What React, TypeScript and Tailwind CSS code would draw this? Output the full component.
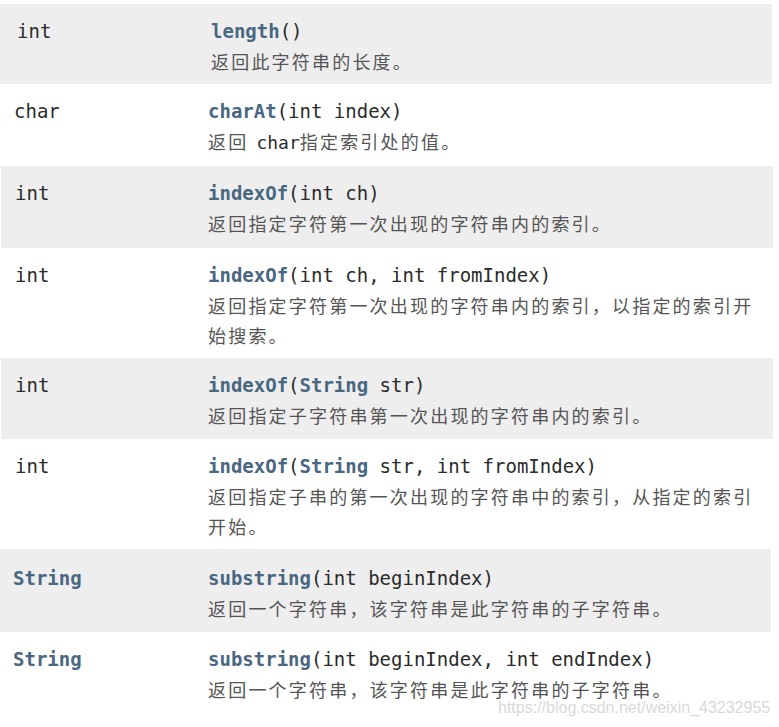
import React from "react";

const mono = "font-['DejaVu_Sans_Mono','Liberation_Mono',monospace]";
const cjk = "font-['Noto_Sans_CJK_SC','Noto_Sans',sans-serif]";

const L = ({ children }: { children: React.ReactNode }) => (
  <span className="font-bold text-[#4a6782]">{children}</span>
);

type Row = {
  type: React.ReactNode;
  code: React.ReactNode;
  desc: React.ReactNode;
  cls: string;
  typeCls: string;
};

const rows: Row[] = [
  {
    type: "int",
    code: (<><L>length</L>()</>),
    desc: "返回此字符串的长度。",
    cls: "bg-[#eeeeee] h-[80px] mt-[4px] w-[772px] pl-[17px]",
    typeCls: "w-[194px]",
  },
  {
    type: "char",
    code: (<><L>charAt</L>(int index)</>),
    desc: (<>返回<span className={`${mono} tracking-normal text-[#2b2b2b] pl-[8px]`}>char</span>指定索引处的值。</>),
    cls: "bg-white h-[82px] w-[772px] pl-[14px]",
    typeCls: "w-[194px]",
  },
  {
    type: "int",
    code: (<><L>indexOf</L>(int ch)</>),
    desc: "返回指定字符第一次出现的字符串内的索引。",
    cls: "bg-[#eeeeee] h-[82px] w-[772px] ml-[1px] pl-[14px]",
    typeCls: "w-[193px]",
  },
  {
    type: "int",
    code: (<><L>indexOf</L>(int ch, int fromIndex)</>),
    desc: (<>返回指定字符第一次出现的字符串内的索引，以指定的索引开<br />始搜索。</>),
    cls: "bg-white h-[110px] w-[772px] pl-[15px]",
    typeCls: "w-[193px]",
  },
  {
    type: "int",
    code: (<><L>indexOf</L>(<L>String</L> str)</>),
    desc: "返回指定子字符串第一次出现的字符串内的索引。",
    cls: "bg-[#eeeeee] h-[81px] w-[772px] ml-[1px] pl-[14px]",
    typeCls: "w-[193px]",
  },
  {
    type: "int",
    code: (<><L>indexOf</L>(<L>String</L> str, int fromIndex)</>),
    desc: (<>返回指定子串的第一次出现的字符串中的索引，从指定的索引<br />开始。</>),
    cls: "bg-white h-[110px] w-[772px] pl-[15px]",
    typeCls: "w-[193px]",
  },
  {
    type: <L>String</L>,
    code: (<><L>substring</L>(int beginIndex)</>),
    desc: "返回一个字符串，该字符串是此字符串的子字符串。",
    cls: "bg-[#eeeeee] h-[83px] w-[771px] pl-[13px] pt-[14px]",
    typeCls: "w-[195px]",
  },
  {
    type: <L>String</L>,
    code: (<><L>substring</L>(int beginIndex, int endIndex)</>),
    desc: "返回一个字符串，该字符串是此字符串的子字符串。",
    cls: "bg-white h-[95px] w-[771px] pl-[13px]",
    typeCls: "w-[195px]",
  },
];

export default function App() {
  return (
    <div className="relative w-[779px] h-[727px] bg-white overflow-hidden">
      {rows.map((r, i) => (
        <div key={i} className={`flex items-start pt-[12px] ${r.cls}`}>
          <div className={`${mono} text-[19px] leading-[30px] text-[#2b2b2b] shrink-0 ${r.typeCls}`}>
            {r.type}
          </div>
          <div className="flex flex-col">
            <div className={`${mono} text-[19px] leading-[30px] text-[#2b2b2b] whitespace-pre`}>
              {r.code}
            </div>
            <div className={`${cjk} text-[18px] leading-[30px] tracking-[2.2px] text-[#555555]`}>
              {r.desc}
            </div>
          </div>
        </div>
      ))}
      <div className="absolute left-[498px] top-[697px] font-['Liberation_Sans',Arial,sans-serif] text-[16px] leading-[22px] text-[#d9d9d9] whitespace-nowrap">
        https://blog.csdn.net/weixin_43232955
      </div>
    </div>
  );
}
